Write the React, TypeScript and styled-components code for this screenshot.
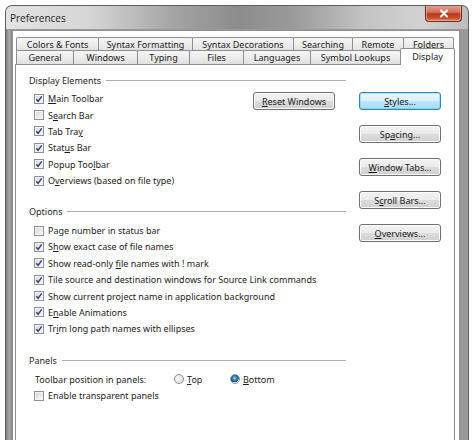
import React from "react";
import styled, { createGlobalStyle } from "styled-components";

const Global = createGlobalStyle`
  html, body { margin: 0; padding: 0; background: #ffffff; }
  body { font-family: "Noto Sans", "Open Sans", sans-serif; font-size: 9px; color: #1b1b1b; }
  * { box-sizing: border-box; }
`;

const Window = styled.div`
  margin: 5px 0 0 5px;
  width: 464px;
  height: 440px;
  border: 1px solid #5e5e5e;
  border-bottom: none;
  border-radius: 7px 7px 0 0;
  background: linear-gradient(90deg, #7c7c7c 0px, #a9a9a9 3px, #8a8a8a 6px, #9a9a9a 100%);
  display: flex;
  flex-direction: column;
  overflow: hidden;
`;

const TitleBar = styled.div`
  height: 24px;
  flex: none;
  display: flex;
  justify-content: space-between;
  align-items: flex-start;
  padding: 0 6px 0 4px;
  background: linear-gradient(
    90deg,
    #e2e2e2 0%,
    #d6d6d6 18%,
    #a5a5a5 36%,
    #8c8c8c 50%,
    #9a9a9a 62%,
    #c4c4c4 78%,
    #d2d2d2 90%,
    #bdbdbd 100%
  );
  border-bottom: 1px solid #9b9b9b;
`;

const Title = styled.div`
  font-family: "Open Sans", "Noto Sans", sans-serif;
  font-size: 10px;
  color: #1e1e1e;
  line-height: 22px;
  padding-top: 1px;
`;

const CloseBtn = styled.div`
  width: 37px;
  height: 17px;
  margin-top: -1px;
  border: 1px solid #6e2a1c;
  border-top: none;
  border-radius: 0 0 4px 4px;
  background: linear-gradient(#e7a493 0%, #d5715a 45%, #b8391f 55%, #c64c2f 80%, #d98a6a 100%);
  box-shadow: inset 0 0 0 1px rgba(255, 220, 210, 0.45);
  display: flex;
  align-items: center;
  justify-content: center;
`;

const Frame = styled.div`
  flex: 1;
  display: flex;
  padding: 0 8px 0 6px;
`;

const Client = styled.div`
  flex: 1;
  background: #ffffff;
  border: 1px solid #8d8d8d;
  border-bottom: none;
  padding: 6px 4px 0 2px;
  display: flex;
  flex-direction: column;
`;

const TabRow = styled.div<{ $front?: boolean }>`
  display: flex;
  align-items: flex-end;
  height: ${(p) => (p.$front ? 13 : 14)}px;
  margin-left: 1px;
  position: relative;
  z-index: ${(p) => (p.$front ? 2 : 1)};
`;

const Tab = styled.div<{ $w: number; $sel?: boolean }>`
  width: ${(p) => p.$w + 1}px;
  height: ${(p) => (p.$sel ? 17 : 14)}px;
  margin-bottom: ${(p) => (p.$sel ? -1 : 0)}px;
  border: 1px solid #8c8e94;
  border-bottom: none;
  border-radius: 2px 2px 0 0;
  background: ${(p) =>
    p.$sel ? "#ffffff" : "linear-gradient(#f6f6f6 0%, #ececec 50%, #e0e0e0 100%)"};
  display: flex;
  align-items: ${(p) => (p.$sel ? "flex-start" : "center")};
  padding-top: ${(p) => (p.$sel ? 2 : 0)}px;
  justify-content: center;
  font-size: 9px;
  line-height: 11px;
  color: #1b1b1b;
  white-space: nowrap;
  position: relative;
  z-index: ${(p) => (p.$sel ? 3 : 1)};
  & + & {
    margin-left: -1px;
  }
`;

const Panel = styled.div`
  flex: 1;
  border: 1px solid #8c8e94;
  border-bottom: none;
  background: #ffffff;
  padding: 8px 12px 0 13px;
  display: grid;
  grid-template-columns: 317px 82px;
  column-gap: 13px;
  align-items: start;
`;

const LeftCol = styled.div`
  display: flex;
  flex-direction: column;
`;

const RightCol = styled.div`
  display: flex;
  flex-direction: column;
  gap: 15px;
  padding-top: 19px;
`;

const Group = styled.div<{ $gap?: number }>`
  margin-bottom: ${(p) => p.$gap ?? 0}px;
`;

const GroupHeader = styled.div<{ $lineEnd?: number }>`
  height: 14px;
  display: flex;
  align-items: center;
  gap: 5px;
  color: #262626;
  &::after {
    content: "";
    flex: 1;
    height: 1px;
    background: #a9acb0;
  }
`;

const GroupBody = styled.div`
  padding-top: 3.5px;
  display: flex;
  justify-content: space-between;
  align-items: flex-start;
`;

const List = styled.div`
  display: flex;
  flex-direction: column;
`;

const Row = styled.label`
  height: 16.4px;
  display: flex;
  align-items: center;
  gap: 4px;
  padding-left: 5px;
  white-space: nowrap;
  color: #1b1b1b;
`;

const Box = styled.span<{ $on?: boolean }>`
  width: 10px;
  height: 10px;
  flex: none;
  border: 1px solid #8f9092;
  background: linear-gradient(135deg, #cfd2d6 0%, #e9eaec 55%, #fafafa 100%);
  box-shadow: inset 0 0 0 1px #f4f4f4;
  display: flex;
  align-items: center;
  justify-content: center;
`;

const Radio = styled.span<{ $on?: boolean }>`
  width: 10px;
  height: 10px;
  flex: none;
  border-radius: 50%;
  border: 1px solid #8f9092;
  background: ${(p) =>
    p.$on
      ? "radial-gradient(circle at 45% 40%, #9fd7f5 0%, #2f7fb5 35%, #184e7e 60%, #dfe3e8 64%, #f5f5f5 100%)"
      : "radial-gradient(circle at 40% 40%, #fbfbfb 0%, #e2e4e7 60%, #cfd2d6 100%)"};
`;

const Mn = styled.span`
  text-decoration: underline;
  text-underline-offset: 1px;
`;

const Button = styled.div<{ $focus?: boolean }>`
  width: 82px;
  height: 18px;
  border: 1px solid ${(p) => (p.$focus ? "#3c7fb1" : "#707070")};
  border-radius: 3px;
  background: ${(p) =>
    p.$focus
      ? "linear-gradient(#eaf6fd 0%, #d9f0fc 50%, #bee6fd 51%, #a7d9f5 100%)"
      : "linear-gradient(#f2f2f2 0%, #ebebeb 50%, #dddddd 51%, #cfcfcf 100%)"};
  box-shadow: inset 0 0 0 1px ${(p) => (p.$focus ? "#48d2ff66" : "#fcfcfc")};
  display: flex;
  align-items: center;
  justify-content: center;
  font-size: 9px;
  color: #1b1b1b;
  white-space: nowrap;
  flex: none;
`;

const ResetBtn = styled(Button)`
  margin-top: 1.5px;
  margin-right: 11px;
`;

const PanelsRow = styled.div`
  height: 16.4px;
  display: flex;
  align-items: center;
  padding-left: 6px;
  white-space: nowrap;
`;

const PosLabel = styled.span`
  width: 139px;
`;

const RadioItem = styled.span<{ $w?: number }>`
  display: flex;
  align-items: center;
  gap: 3px;
  width: ${(p) => p.$w ?? 56}px;
`;

const Check = () => (
  <svg width="8" height="8" viewBox="0 0 8 8">
    <path d="M1.3 4.2 L3.1 6.3 L6.7 1.4" fill="none" stroke="#243f86" strokeWidth="1.4" />
  </svg>
);

const CloseX = () => (
  <svg width="10" height="9" viewBox="0 0 10 9">
    <path d="M2 1.5 L8 7.5 M8 1.5 L2 7.5" stroke="#ffffff" strokeWidth="2" strokeLinecap="round" />
  </svg>
);

type Lbl = [string, string, string];

const CheckRow = ({ on, label }: { on: boolean; label: Lbl }) => (
  <Row>
    <Box $on={on}>{on && <Check />}</Box>
    <span>
      {label[0]}
      {label[1] && <Mn>{label[1]}</Mn>}
      {label[2]}
    </span>
  </Row>
);

const row1: [string, number][] = [
  ["Colors & Fonts", 82],
  ["Syntax Formatting", 94],
  ["Syntax Decorations", 101],
  ["Searching", 59],
  ["Remote", 51],
  ["Folders", 50],
];

const row2: [string, number, boolean?][] = [
  ["General", 57],
  ["Windows", 64],
  ["Typing", 52],
  ["Files", 54],
  ["Languages", 67],
  ["Symbol Lookups", 90],
  ["Display", 54, true],
];

const display: [boolean, Lbl][] = [
  [true, ["", "M", "ain Toolbar"]],
  [false, ["S", "e", "arch Bar"]],
  [true, ["Tab Tra", "y", ""]],
  [true, ["Stat", "u", "s Bar"]],
  [true, ["Popup Too", "l", "bar"]],
  [true, ["O", "v", "erviews (based on file type)"]],
];

const options: [boolean, Lbl][] = [
  [false, ["Page number in status bar", "", ""]],
  [true, ["S", "h", "ow exact case of file names"]],
  [true, ["Show read-only ", "f", "ile names with ! mark"]],
  [true, ["Tile source and destination windows for Source Link commands", "", ""]],
  [true, ["Show current project name in application background", "", ""]],
  [true, ["E", "n", "able Animations"]],
  [true, ["Tr", "i", "m long path names with ellipses"]],
];

const sideButtons: [Lbl, boolean][] = [
  [["", "S", "tyles..."], true],
  [["Sp", "a", "cing..."], false],
  [["", "W", "indow Tabs..."], false],
  [["S", "c", "roll Bars..."], false],
  [["", "O", "verviews..."], false],
];

export default function App() {
  return (
    <>
      <Global />
      <Window>
        <TitleBar>
          <Title>Preferences</Title>
          <CloseBtn>
            <CloseX />
          </CloseBtn>
        </TitleBar>
        <Frame>
          <Client>
            <TabRow>
              {row1.map(([t, w]) => (
                <Tab key={t} $w={w}>
                  {t}
                </Tab>
              ))}
            </TabRow>
            <TabRow $front>
              {row2.map(([t, w, s]) => (
                <Tab key={t} $w={w} $sel={s}>
                  {t}
                </Tab>
              ))}
            </TabRow>
            <Panel>
              <LeftCol>
                <Group $gap={16}>
                  <GroupHeader>Display Elements</GroupHeader>
                  <GroupBody>
                    <List>
                      {display.map(([on, l]) => (
                        <CheckRow key={l.join("")} on={on} label={l} />
                      ))}
                    </List>
                    <ResetBtn>
                      <span>
                        <Mn>R</Mn>eset Windows
                      </span>
                    </ResetBtn>
                  </GroupBody>
                </Group>
                <Group $gap={16.5}>
                  <GroupHeader>Options</GroupHeader>
                  <GroupBody>
                    <List>
                      {options.map(([on, l]) => (
                        <CheckRow key={l.join("")} on={on} label={l} />
                      ))}
                    </List>
                  </GroupBody>
                </Group>
                <Group>
                  <GroupHeader>Panels</GroupHeader>
                  <GroupBody>
                    <List>
                      <PanelsRow>
                        <PosLabel>Toolbar position in panels:</PosLabel>
                        <RadioItem $w={56}>
                          <Radio />
                          <span>
                            <Mn>T</Mn>op
                          </span>
                        </RadioItem>
                        <RadioItem $w={60}>
                          <Radio $on />
                          <span>
                            <Mn>B</Mn>ottom
                          </span>
                        </RadioItem>
                      </PanelsRow>
                      <CheckRow on={false} label={["Enable transparent panels", "", ""]} />
                    </List>
                  </GroupBody>
                </Group>
              </LeftCol>
              <RightCol>
                {sideButtons.map(([l, f]) => (
                  <Button key={l.join("")} $focus={f}>
                    <span>
                      {l[0]}
                      <Mn>{l[1]}</Mn>
                      {l[2]}
                    </span>
                  </Button>
                ))}
              </RightCol>
            </Panel>
          </Client>
        </Frame>
      </Window>
    </>
  );
}
